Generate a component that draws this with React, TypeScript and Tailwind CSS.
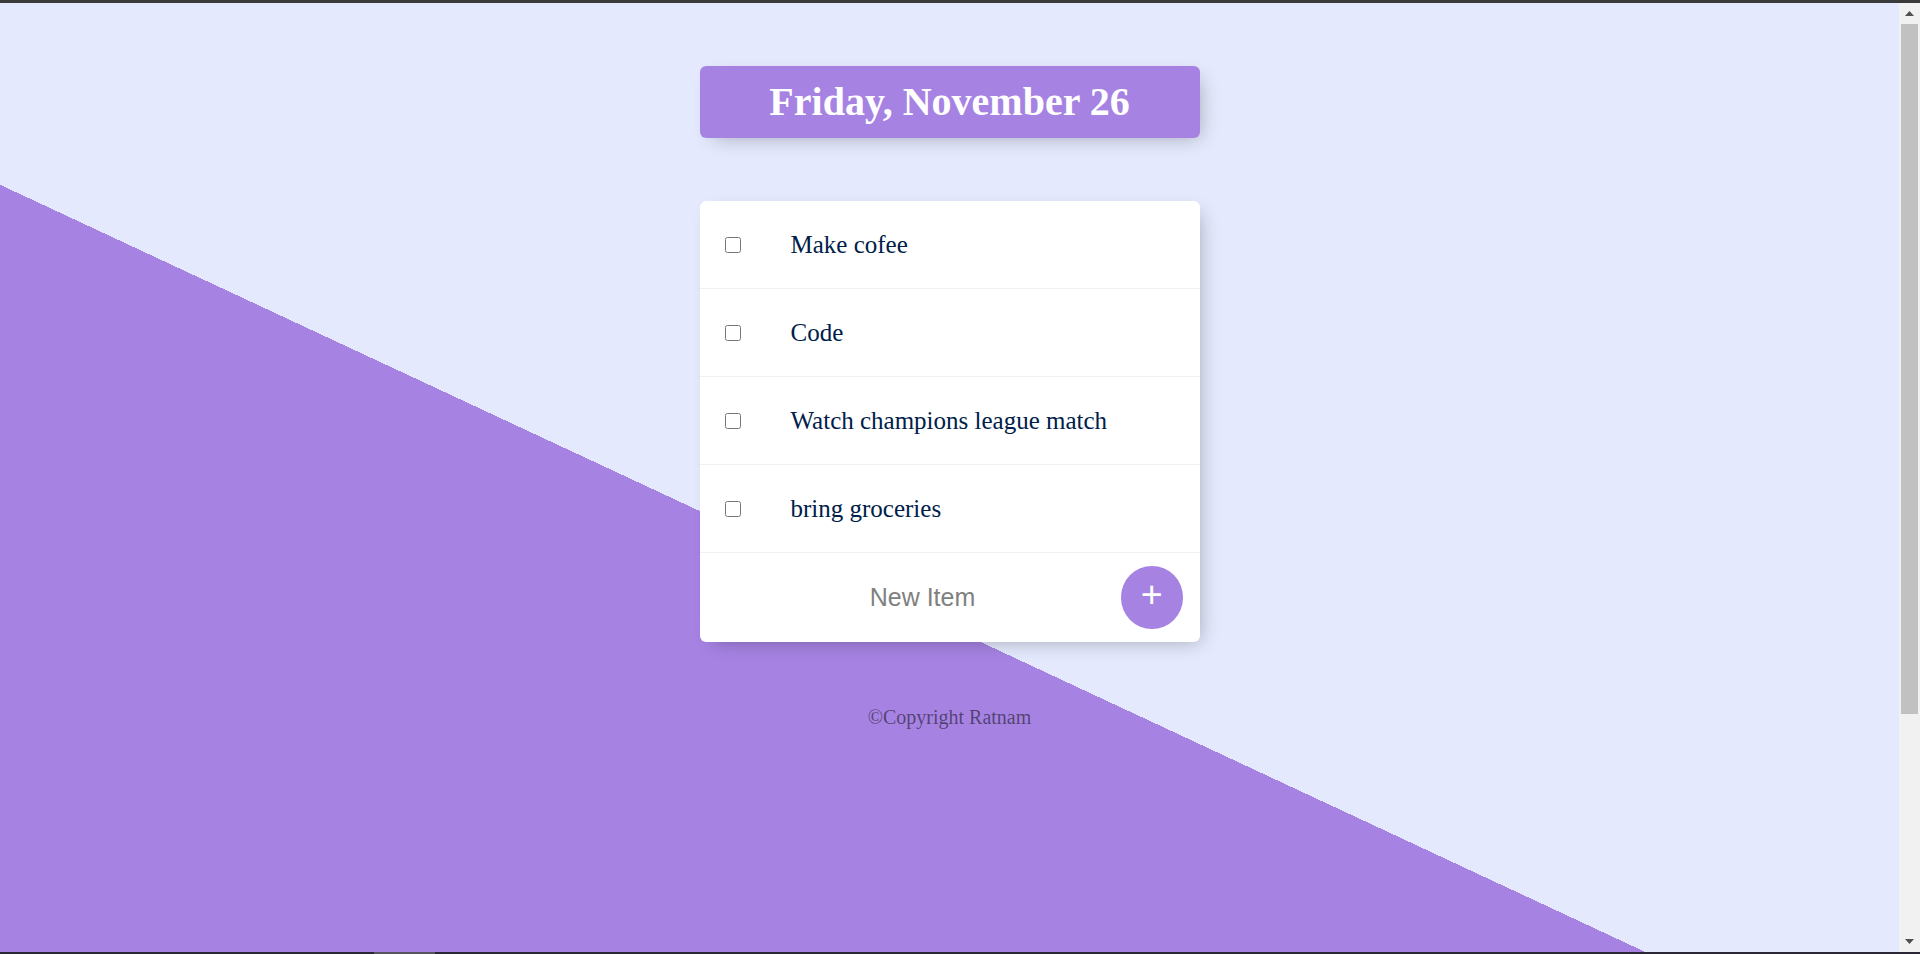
const tasks = ["Make cofee", "Code", "Watch champions league match", "bring groceries"]

const Arrow = ({ down }: { down?: boolean }) => (
  <svg width="9" height="5" viewBox="0 0 9 5">
    <polygon points={down ? "0,0 9,0 4.5,5" : "0,5 9,5 4.5,0"} fill="#505050" />
  </svg>
)

const App = () => {
  return (
    <div className="h-screen flex flex-col overflow-hidden bg-[#e4e9fd]">
      <div className="h-[3px] shrink-0 bg-[#3a3a3a]" />

      <div className="flex flex-1 min-h-0">
        <main className="flex-1 overflow-hidden">
          <div className="min-h-[1249px] pt-[62.5px] bg-[linear-gradient(25deg,#A683E3_50%,#E4E9FD_50%)] font-['Liberation_Serif','Times_New_Roman',serif]">
            {/* heading */}
            <div className="w-[500px] mx-auto bg-[#A683E3] rounded-[6.25px] shadow-[6.25px_6.25px_18.75px_-6.25px_rgba(0,0,0,0.3)]">
              <h1 className="py-[12.5px] text-center text-white text-[40px] leading-[47px] font-bold">
                Friday, November 26
              </h1>
            </div>

            {/* list */}
            <div className="w-[500px] mx-auto mt-[63.5px] bg-white rounded-[6.25px] shadow-[6.25px_6.25px_18.75px_-6.25px_rgba(0,0,0,0.3)]">
              {tasks.map((task) => (
                <div key={task} className="flex items-center min-h-[88px] border-b border-[#f1f1f1]">
                  <input type="checkbox" className="m-[25px] w-4 h-4 shrink-0" />
                  <p className="p-[25px] text-[25px] leading-[29px] font-extralight text-[#00204a]">{task}</p>
                </div>
              ))}
              <form className="flex items-center min-h-[89px] ml-[25px]" onSubmit={(e) => e.preventDefault()}>
                <input
                  type="text"
                  name="newItem"
                  placeholder="New Item"
                  autoComplete="off"
                  className="w-[396px] h-[75px] px-[2.5px] text-center text-[25px] font-extralight bg-transparent outline-none placeholder:text-[gray] placeholder:opacity-100 font-['Liberation_Sans',Arial,sans-serif]"
                />
                <button
                  type="submit"
                  className="w-[62.5px] min-h-[62.5px] pb-[7.5px] rounded-full bg-[#A683E3] text-white text-[37.5px] leading-normal font-['Liberation_Sans',Arial,sans-serif]"
                >
                  +
                </button>
              </form>
            </div>

            <footer className="mt-[64px] text-center text-[20px] leading-[23px] text-black/50">
              ©Copyright Ratnam
            </footer>
          </div>
        </main>

        {/* scrollbar */}
        <div className="w-[21px] shrink-0 bg-[#f1f1f1] flex flex-col">
          <div className="h-[21px] flex items-center justify-center">
            <Arrow />
          </div>
          <div className="h-[690px] w-[17px] mx-[2px] bg-[#c1c1c1]" />
          <div className="flex-1" />
          <div className="h-[21px] flex items-center justify-center">
            <Arrow down />
          </div>
        </div>
      </div>

      <div className="h-[2px] shrink-0 flex bg-[#2b2737]">
        <div className="w-[374px]" />
        <div className="w-[61px] bg-[#57535f]" />
      </div>
    </div>
  )
}

export default App
